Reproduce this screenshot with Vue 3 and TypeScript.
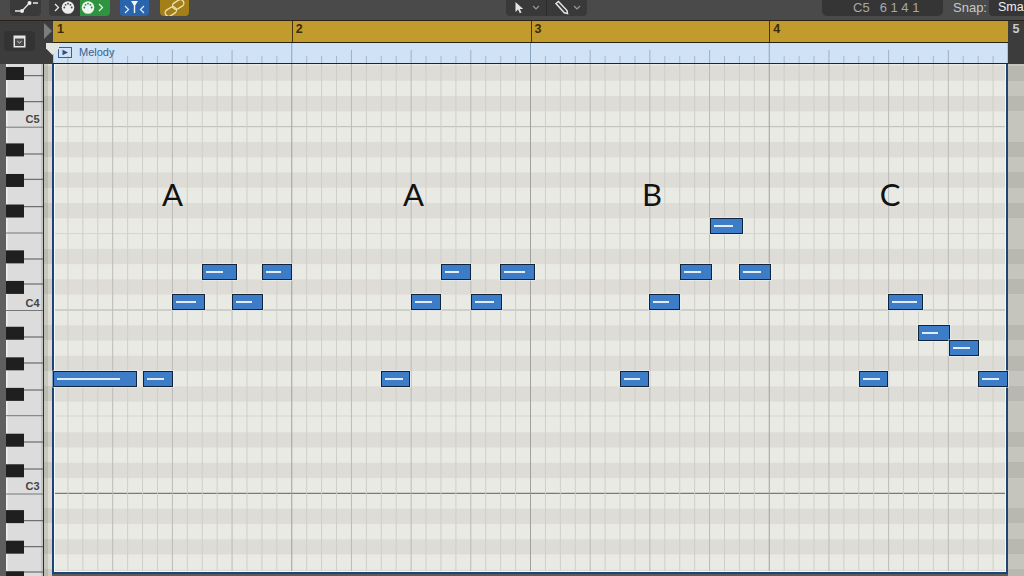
<script setup lang="ts">
// piano roll geometry, in page pixels
const ROW_H = 15.28
const FIRST_ROW = 65.5
const GRID_X = 54
const GRID_Y = 64
const STEP = 238.75 / 16
const rowTop = (row: number) => FIRST_ROW + row * ROW_H

// D#5 at the top, going down by semitone
const blackInOctave = [0, 2, 5, 7, 9]
const rows = Array.from({ length: 34 }, (_, i) => ({ y: rowTop(i), black: blackInOctave.includes(i % 12) }))

const steps = Array.from({ length: 65 }, (_, i) => ({
  x: 53 + i * STEP,
  kind: i % 16 === 0 ? 'bar' : i % 4 === 0 ? 'beat' : 'step',
}))

const keyLines = [
  { y: 75.7, full: false }, { y: 101.7, full: false }, { y: 127.2, full: true },
  { y: 154, full: false }, { y: 179.3, full: false }, { y: 206.7, full: false },
  { y: 233, full: true }, { y: 259, full: false }, { y: 284, full: false },
  { y: 310.5, full: true }, { y: 337, full: false }, { y: 363, full: false },
  { y: 390, full: false }, { y: 415.7, full: true }, { y: 442, full: false },
  { y: 469, full: false }, { y: 494, full: true }, { y: 520.7, full: false },
  { y: 546.7, full: false }, { y: 572, full: false },
]
const keyLabels = [{ text: 'C5', y: 123 }, { text: 'C4', y: 307 }, { text: 'C3', y: 490 }]

const notes = [
  { row: 20, x1: 53.3, x2: 136.7, line: 63 },
  { row: 20, x1: 142.7, x2: 172.7, line: 17 },
  { row: 15, x1: 172.3, x2: 205, line: 20 },
  { row: 13, x1: 202, x2: 237, line: 17 },
  { row: 15, x1: 231.7, x2: 262.7, line: 16 },
  { row: 13, x1: 262, x2: 292, line: 15 },
  { row: 20, x1: 381, x2: 410, line: 18 },
  { row: 15, x1: 411.3, x2: 441.3, line: 17 },
  { row: 13, x1: 441, x2: 471, line: 14 },
  { row: 15, x1: 471, x2: 501.7, line: 19 },
  { row: 13, x1: 500.3, x2: 535, line: 21 },
  { row: 20, x1: 620, x2: 649, line: 16 },
  { row: 15, x1: 649.3, x2: 680.3, line: 16 },
  { row: 13, x1: 680, x2: 712, line: 17 },
  { row: 10, x1: 709.7, x2: 742.7, line: 19 },
  { row: 13, x1: 739, x2: 771.3, line: 18 },
  { row: 20, x1: 858.7, x2: 887.7, line: 17 },
  { row: 15, x1: 888.3, x2: 923.3, line: 25 },
  { row: 17, x1: 918.3, x2: 950, line: 16 },
  { row: 18, x1: 949.3, x2: 978.7, line: 17 },
  { row: 20, x1: 978.3, x2: 1007.7, line: 17 },
]
const noteStyle = (n: { row: number; x1: number; x2: number }) => ({
  left: n.x1 - GRID_X + 'px',
  top: rowTop(n.row) - GRID_Y - 0.4 + 'px',
  width: n.x2 - n.x1 + 'px',
})

const sections = [
  { text: 'A', x: 172.5 },
  { text: 'A', x: 413.5 },
  { text: 'B', x: 652 },
  { text: 'C', x: 890 },
]
</script>

<template>
  <div class="roll">
    <div class="toolbar">
      <div class="btn btn-curve">
        <svg width="31" height="16" viewBox="0 0 31 16">
          <path d="M5 11h5M12 11 19 3.500M23 3h5" stroke="#e8e8e8" stroke-width="1.300" fill="none" />
          <circle cx="12" cy="11" r="2" fill="#f0f0f0" />
          <circle cx="19.500" cy="3" r="2" fill="#f0f0f0" />
        </svg>
      </div>
      <div class="btn-pair">
        <div class="btn btn-midi-in">
          <svg width="31" height="16" viewBox="0 0 31 16">
            <path d="M6 4l3.500 3.500L6 11" stroke="#e8e8e8" stroke-width="1.300" fill="none" />
            <circle cx="19" cy="7.500" r="6.300" fill="#ececec" />
            <g fill="#444"><circle cx="15.300" cy="7.500" r=".9" /><circle cx="16.600" cy="4.800" r=".9" /><circle cx="19" cy="3.700" r=".9" /><circle cx="21.400" cy="4.800" r=".9" /><circle cx="22.700" cy="7.500" r=".9" /></g>
          </svg>
        </div>
        <div class="btn btn-midi-out">
          <svg width="30" height="16" viewBox="0 0 30 16">
            <circle cx="8" cy="7.500" r="6.300" fill="#eef5ee" />
            <g fill="#2f8f40"><circle cx="4.300" cy="7.500" r=".9" /><circle cx="5.600" cy="4.800" r=".9" /><circle cx="8" cy="3.700" r=".9" /><circle cx="10.400" cy="4.800" r=".9" /><circle cx="11.700" cy="7.500" r=".9" /></g>
            <path d="M19 4l3.500 3.500L19 11" stroke="#e8f3e8" stroke-width="1.300" fill="none" />
          </svg>
        </div>
      </div>
      <div class="btn btn-filter">
        <svg width="29" height="16" viewBox="0 0 29 16">
          <path d="M5 6l3.500 3.500L5 13M24 6l-3.500 3.500L24 13" stroke="#e6eefa" stroke-width="1.200" fill="none" />
          <path d="M11 1h7l-2.800 4.500V13h-1.400V5.500z" fill="#f2f5fa" />
        </svg>
      </div>
      <div class="btn btn-link">
        <svg width="29" height="16" viewBox="0 0 29 16">
          <g fill="none" stroke="#efe2b4" stroke-width="1.300" transform="rotate(-32 14.500 8)">
            <rect x="3.500" y="5.500" width="12" height="7" rx="3.500" />
            <rect x="13.500" y="3.500" width="12" height="7" rx="3.500" />
          </g>
        </svg>
      </div>
      <div class="tools">
        <div class="tool">
          <svg width="40" height="16" viewBox="0 0 40 16">
            <path d="M9.500 2v10l2.600-2.400 1.700 3.600 1.700-.8-1.700-3.500h3.400z" fill="#e4e4e4" />
            <path d="M27 6l3 3 3-3" stroke="#9a9a9a" stroke-width="1.100" fill="none" />
          </svg>
        </div>
        <div class="tool tool-pen">
          <svg width="41" height="16" viewBox="0 0 41 16">
            <path d="M9 3.500 11.500 1.500 20 10.500 20.500 13.500 17.300 12.800z" fill="none" stroke="#e4e4e4" stroke-width="1.500" />
            <path d="M27 6l3 3 3-3" stroke="#9a9a9a" stroke-width="1.100" fill="none" />
          </svg>
        </div>
      </div>
      <div class="lcd"><span>C5</span><span>6 1 4 1</span></div>
      <span class="snap-label">Snap:</span>
      <div class="snap-box">Sma</div>
    </div>

    <div class="header">
      <div class="corner">
        <div class="view-btn">
          <svg width="13" height="13" viewBox="0 0 13 13">
            <rect x=".5" y=".5" width="12" height="12" fill="#e6e6e6" />
            <rect x="2" y="3.500" width="9" height="7.500" fill="#4a4a4a" />
            <path d="M4.300 6l2.200 2 2.200-2" stroke="#e6e6e6" stroke-width="1" fill="none" />
          </svg>
        </div>
        <span class="corner-arrow"></span>
      </div>
      <div class="timeline">
        <div class="bars">
          <div v-for="n in 4" :key="n" class="bar"><span>{{ n }}</span></div>
        </div>
        <div class="lane">
          <svg class="ticks" width="955" height="20" viewBox="53 43 955 20">
            <template v-for="s in steps" :key="s.x">
              <line v-if="s.kind === 'bar'" :x1="s.x" :x2="s.x" y1="43" y2="63" stroke="#8aa3bd" />
              <line v-else-if="s.kind === 'beat'" :x1="s.x" :x2="s.x" y1="50" y2="63" stroke="#9fb0c0" />
              <line v-else :x1="s.x" :x2="s.x" y1="56" y2="63" stroke="#a9b8c6" />
            </template>
          </svg>
          <div class="region-name">
            <svg width="14" height="11" viewBox="0 0 14 11">
              <rect x=".5" y=".5" width="13" height="10" fill="none" stroke="#3d5f8c" />
              <path d="M4.500 2.800v5.400L10 5.500z" fill="#2f4f7c" />
            </svg>
            <span>Melody</span>
          </div>
        </div>
      </div>
      <div class="side"><span>5</span></div>
      <svg class="playhead" width="13" height="12" viewBox="0 0 13 12">
        <path d="M0 0h13v5.500L6.500 12 0 5.500z" fill="#e4e4e0" />
      </svg>
    </div>

    <div class="body">
      <div class="strip"></div>
      <svg class="keys" width="37" height="512" viewBox="6 64 37 512">
        <rect x="6" y="64" width="37" height="512" fill="#dcdcdd" />
        <rect x="6" y="64" width="1.500" height="512" fill="#efefef" />
        <rect x="41" y="64" width="2" height="512" fill="#c4c4c4" />
        <template v-for="l in keyLines" :key="l.y">
          <line :x1="l.full ? 6 : 24" x2="43" :y1="l.y" :y2="l.y" :stroke="l.full ? '#77777a' : '#55555a'" />
        </template>
        <template v-for="r in rows" :key="r.y">
          <rect v-if="r.black" x="6" :y="r.y + 1.5" width="18" height="13" fill="#1f1f1f" />
        </template>
        <text v-for="k in keyLabels" :key="k.text" x="39.500" :y="k.y" class="key-label" text-anchor="end">{{ k.text }}</text>
      </svg>
      <div class="gutter">
        <div v-for="r in rows" :key="r.y" class="gutter-row" :class="{ dark: r.black }"></div>
      </div>
      <div class="grid">
        <svg class="grid-lines" width="952" height="508" viewBox="54 64 952 508">
          <rect x="54" y="64" width="952" height="508" fill="#eaeae5" />
          <template v-for="r in rows" :key="r.y">
            <rect v-if="r.black" x="54" :y="r.y" width="952" :height="ROW_H" fill="#dddcd6" />
          </template>
          <line x1="54" x2="1006" y1="233.600" y2="233.600" stroke="#d6d6d0" />
          <line x1="54" x2="1006" y1="416" y2="416" stroke="#d6d6d0" />
          <line x1="54" x2="1006" y1="126.700" y2="126.700" stroke="#bdbdb8" />
          <line x1="54" x2="1006" y1="310" y2="310" stroke="#b4b4af" />
          <line x1="54" x2="1006" y1="493.300" y2="493.300" stroke="#5e5e5c" />
          <template v-for="s in steps" :key="s.x">
            <line
              :x1="s.x" :x2="s.x" y1="64" y2="572"
              :stroke="s.kind === 'bar' ? '#a0a09d' : s.kind === 'beat' ? '#bababa' : '#cfcfc9'"
            />
          </template>
        </svg>
        <div class="grid-glow"></div>
        <span
          v-for="s in sections"
          :key="s.x"
          class="section"
          :style="{ left: s.x - GRID_X + 'px' }"
        >{{ s.text }}</span>
        <div v-for="n in notes" :key="n.x1" class="note" :style="noteStyle(n)">
          <i :style="{ width: n.line + 'px' }"></i>
        </div>
      </div>
      <div class="right-pane">
        <div v-for="r in rows" :key="r.y" class="pane-row" :class="{ dark: r.black }"></div>
      </div>
    </div>
  </div>
</template>

<style>
html, body { margin: 0; background: #474747; }
</style>

<style scoped>
.roll {
  width: 1024px; height: 576px; overflow: hidden;
  display: flex; flex-direction: column;
  background: #474747;
  font-family: "Liberation Sans", Arial, sans-serif;
}

.toolbar {
  flex: none; box-sizing: border-box; padding-left: 10px;
  display: flex; align-items: flex-start;
  background: #4a4a4a;
  border-bottom: 1px solid #2b2118;
  height: 21px;
}
.btn {
  height: 16px; border-radius: 0 0 4px 4px; background: #3a3a3a; flex: none;
}
.btn svg, .tool svg { display: block; }
.btn-curve { width: 31px; }
.btn-pair { display: flex; margin-left: 8px; }
.btn-midi-in { width: 31px; border-radius: 0 0 0 4px; }
.btn-midi-out { width: 30px; border-radius: 0 0 4px 0; background: #2f9440; }
.btn-filter { width: 29px; margin-left: 10px; background: #2a64ad; }
.btn-link { width: 29px; margin-left: 11px; background: #a37f18; }
.tools {
  display: flex; margin-left: 317px; height: 16px; flex: none;
  background: #393939; border-radius: 0 0 4px 4px;
}
.tool { width: 40px; }
.tool-pen { width: 41px; border-left: 1px solid #2c2c2c; box-sizing: border-box; }
.lcd {
  width: 121px; height: 16px; margin-left: 235px; flex: none; box-sizing: border-box;
  padding-left: 31px; display: flex; gap: 10px;
  background: #353535; border-radius: 0 0 5px 5px;
  color: #a8a8a8; font-size: 13px; line-height: 15px; white-space: nowrap;
}
.snap-label {
  margin-left: 10px; flex: none; width: 36px;
  color: #c8c8c8; font-size: 13px; line-height: 15px;
}
.snap-box {
  flex: none; width: 35px; height: 16px; box-sizing: border-box; padding-left: 9px;
  background: #353535; border-radius: 0 0 0 4px;
  color: #ededed; font-size: 12.5px; line-height: 15px; white-space: nowrap;
}

.header { position: relative; display: flex; height: 43px; flex: none; }
.corner {
  position: relative; width: 53px; flex: none; box-sizing: border-box; padding: 10px 0 0 4px;
  background: #3c3c3c;
}
.view-btn {
  width: 31px; height: 20px; border-radius: 4px; background: #333;
  display: flex; align-items: center; justify-content: center;
}
.view-btn svg { display: block; }
.corner-arrow {
  position: absolute; left: 44px; top: 2px;
  border-left: 8px solid #7d7d7d; border-top: 8px solid transparent; border-bottom: 8px solid transparent;
}
.timeline { width: 955px; flex: none; display: flex; flex-direction: column; }
.bars {
  height: 22px; box-sizing: border-box; display: flex;
  background: #c19b2b; border-bottom: 1px solid #2a2213;
}
.bar {
  flex: 1; box-sizing: border-box; border-left: 1px solid #43350e;
  padding: 1px 0 0 3px;
  color: #3a2c0a; font-size: 12.5px; line-height: 14px; font-weight: bold;
}
.bar:first-child { border-left-color: transparent; }
.lane {
  position: relative; height: 21px; box-sizing: border-box;
  background: #cfe2f6; border-bottom: 1px solid #1d2530;
}
.ticks { position: absolute; left: 0; top: 0; }
.region-name {
  position: relative; display: flex; align-items: center; gap: 7px;
  padding: 3px 0 0 5px;
  color: #3a5f92; font-size: 11px; line-height: 13px;
}
.region-name svg { display: block; }
.side {
  width: 16px; flex: none; background: #3c3c3c;
  color: #cbcbcb; font-size: 12.5px; font-weight: bold; line-height: 14px; text-align: center;
  padding-top: 1px; box-sizing: border-box;
}
.playhead { position: absolute; left: 46px; top: 22px; }

.body { display: flex; flex: 1; min-height: 0; background: #5b5b5a; }
.strip { width: 6px; flex: none; background: #5f5f5f; }
.keys { display: block; flex: none; }
.key-label { font-size: 11px; font-weight: bold; fill: #464646; }
.gutter {
  width: 9px; flex: none; box-sizing: border-box; padding-top: 1.5px;
  background: linear-gradient(90deg, #2e2e2e 0 1px, #c9c8bf 1px 5px, #dddcd4 5px 100%);
}
.gutter-row { height: 15.28px; margin-left: 1px; }
.gutter-row.dark { background: rgba(90, 90, 80, 0.12); }
.grid {
  position: relative; width: 956px; height: 510px; flex: none; box-sizing: border-box;
  border: 2px solid #1e4375; border-top: 0;
}
.grid-lines { display: block; }
.grid-glow {
  position: absolute; inset: 0;
  box-shadow: inset 1px 0 0 #f2f7fc, inset -1px 0 0 #f2f7fc, inset 0 -1px 0 #f2f7fc;
}
.section {
  position: absolute; top: 109px; transform: translateX(-50%);
  color: #121212; font-family: Lato, "Open Sans", sans-serif; font-size: 31px; line-height: 42px;
}
.note {
  position: absolute; height: 16px; box-sizing: border-box;
  display: flex; align-items: center; padding-left: 3px;
  background: #3d7cc6;
  border: 1.5px solid #12243c;
  box-shadow: 0 0 0 .5px #f4f6f8;
}
.note i { display: block; height: 2px; background: #e2ecf9; }
.right-pane { flex: 1; min-width: 0; background: #c6c5bd; padding-top: 1.5px; }
.pane-row { height: 15.28px; }
.pane-row.dark { background: #b9b8b0; }
</style>
